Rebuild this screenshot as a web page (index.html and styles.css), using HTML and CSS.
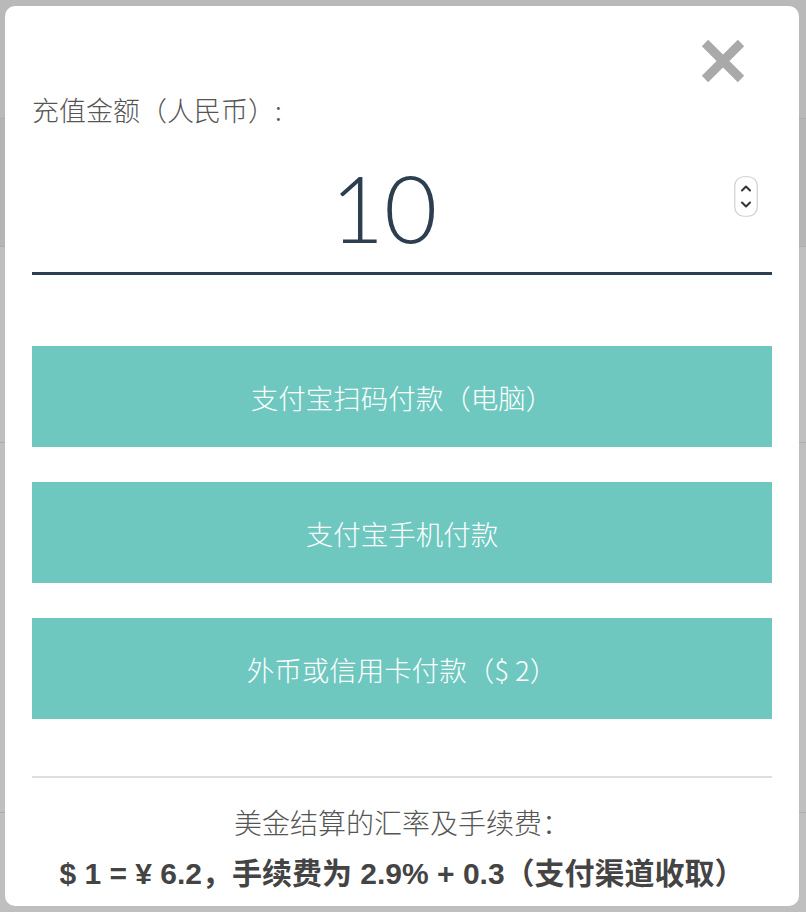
FILE: index.html
```html
<!DOCTYPE html>
<html lang="zh-CN">
<head>
<meta charset="utf-8">
<title>充值</title>
<link rel="stylesheet" href="styles.css">
</head>
<body>
<div class="page">
  <div class="band band-top"></div>
  <div class="band band-head"></div>
  <div class="band band-row1"></div>
  <div class="band band-row2"></div>
  <div class="band band-row3"></div>
</div>
<div class="overlay"></div>
<div class="modal">
  <button class="close" aria-label="关闭">
    <svg width="44" height="44" viewBox="0 0 44 44"><path d="M4 4 L40 40 M40 4 L4 40" stroke="#a9a9a9" stroke-width="9" stroke-linecap="butt"/></svg>
  </button>
  <div class="label">充值金额（人民币）:</div>
  <div class="amount">
    <div class="amount-value">10</div>
    <div class="spinner">
      <svg width="24" height="41" viewBox="0 0 24 41">
        <rect x="0.75" y="0.75" width="22.5" height="39.5" rx="9" fill="#fff" stroke="#cfcfcf" stroke-width="1.2"/>
        <path d="M8 14.5 L12 10.5 L16 14.5" fill="none" stroke="#333" stroke-width="2" stroke-linecap="round" stroke-linejoin="round"/>
        <path d="M8 26.5 L12 30.5 L16 26.5" fill="none" stroke="#333" stroke-width="2" stroke-linecap="round" stroke-linejoin="round"/>
      </svg>
    </div>
  </div>
  <div class="buttons">
    <button class="pay">支付宝扫码付款（电脑）</button>
    <button class="pay">支付宝手机付款</button>
    <button class="pay">外币或信用卡付款（$ 2）</button>
  </div>
  <div class="divider"></div>
  <div class="footer">
    <div class="rate-title">美金结算的汇率及手续费：</div>
    <div class="rate">$ 1 = ¥ 6.2，手续费为 2.9% + 0.3（支付渠道收取）</div>
  </div>
</div>
</body>
</html>
```
FILE: styles.css
```css
html, body {
  margin: 0;
  padding: 0;
}
body {
  width: 806px;
  height: 912px;
  overflow: hidden;
  background: #fff;
  font-family: "Noto Sans CJK SC", "Noto Sans", sans-serif;
  position: relative;
}
.page {
  display: flex;
  flex-direction: column;
}
.band {
  border-bottom: 1px solid #e6e6e6;
  background: #fff;
}
.band-top { height: 118px; background: #f7f7f7; }
.band-head { height: 127px; background: #f2f2f2; }
.band-row1 { height: 195px; }
.band-row2 { height: 369px; }
.band-row3 { height: 99px; }
.overlay {
  position: absolute;
  inset: 0;
  background: rgba(0, 0, 0, 0.25);
}
.modal {
  position: absolute;
  left: 5px;
  top: 6px;
  width: 794px;
  height: 900px;
  box-sizing: border-box;
  background: #fff;
  border-radius: 10px;
  padding: 84px 27px 0;
}
.close {
  position: absolute;
  top: 33px;
  right: 54px;
  width: 44px;
  height: 44px;
  padding: 0;
  border: 0;
  background: none;
  cursor: pointer;
}
.close svg { display: block; }
.label {
  font-size: 27px;
  line-height: 40px;
  color: #555;
  font-weight: 300;
}
.amount {
  margin-top: 0;
  height: 142px;
  border-bottom: 3px solid #2c3e50;
  display: flex;
  align-items: flex-start;
}
.amount-value {
  flex: 1;
  text-align: center;
  font-family: "Lato", sans-serif;
  font-weight: 300;
  font-size: 92px;
  line-height: 92px;
  padding-top: 32px;
  padding-left: 2px;
  color: #2c3e50;
}
.spinner {
  margin-top: 46px;
  margin-right: 14px;
  width: 24px;
  height: 41px;
}
.spinner svg { display: block; }
.buttons {
  margin-top: 71px;
  display: flex;
  flex-direction: column;
  gap: 35px;
}
.pay {
  height: 101px;
  border: 0;
  background: #6ec8bf;
  color: #fff;
  font-family: "Noto Sans CJK SC", sans-serif;
  font-weight: 300;
  font-size: 27.5px;
  padding: 0;
  cursor: pointer;
}
.divider {
  margin-top: 57px;
  height: 2px;
  background: #dedede;
}
.footer {
  margin-top: 19px;
  text-align: center;
  line-height: 50px;
  color: #555;
}
.rate-title {
  font-size: 28px;
  font-weight: 300;
}
.rate {
  font-family: "Liberation Sans", "Noto Sans CJK SC", sans-serif;
  font-weight: 700;
  font-size: 30px;
  line-height: 54px;
  color: #444;
}
```
